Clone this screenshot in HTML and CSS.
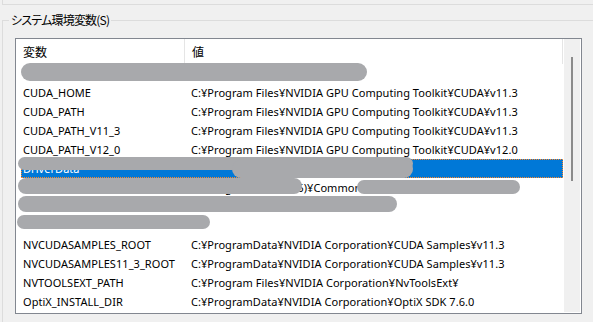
FILE: index.html
```html
<!DOCTYPE html>
<html lang="ja">
<head>
<meta charset="utf-8">
<title>システム環境変数</title>
<link rel="stylesheet" href="styles.css">
</head>
<body>
<div class="prev-group"></div>
<fieldset class="group">
  <legend class="group-title">システム環境変数(S)</legend>
  <div class="listview">
    <div class="list">
      <div class="header">
        <div class="hcell hcell-name">変数</div>
        <div class="hcell hcell-value">値</div>
      </div>
      <div class="rows">
        <div class="row"><span class="name"></span><span class="value"></span></div>
        <div class="row"><span class="name">CUDA_HOME</span><span class="value">C:¥Program Files¥NVIDIA GPU Computing Toolkit¥CUDA¥v11.3</span></div>
        <div class="row"><span class="name">CUDA_PATH</span><span class="value">C:¥Program Files¥NVIDIA GPU Computing Toolkit¥CUDA¥v11.3</span></div>
        <div class="row"><span class="name">CUDA_PATH_V11_3</span><span class="value">C:¥Program Files¥NVIDIA GPU Computing Toolkit¥CUDA¥v11.3</span></div>
        <div class="row"><span class="name">CUDA_PATH_V12_0</span><span class="value">C:¥Program Files¥NVIDIA GPU Computing Toolkit¥CUDA¥v12.0</span></div>
        <div class="row row-selected"><span class="name">DriverData</span><span class="value"></span></div>
        <div class="row"><span class="name"></span><span class="value">C:¥Program Files (x86)¥Common Files</span></div>
        <div class="row"><span class="name"></span><span class="value"></span></div>
        <div class="row"><span class="name"></span><span class="value"></span></div>
        <div class="row"><span class="name">NVCUDASAMPLES_ROOT</span><span class="value">C:¥ProgramData¥NVIDIA Corporation¥CUDA Samples¥v11.3</span></div>
        <div class="row"><span class="name">NVCUDASAMPLES11_3_ROOT</span><span class="value">C:¥ProgramData¥NVIDIA Corporation¥CUDA Samples¥v11.3</span></div>
        <div class="row"><span class="name">NVTOOLSEXT_PATH</span><span class="value">C:¥Program Files¥NVIDIA Corporation¥NvToolsExt¥</span></div>
        <div class="row"><span class="name">OptiX_INSTALL_DIR</span><span class="value">C:¥ProgramData¥NVIDIA Corporation¥OptiX SDK 7.6.0</span></div>
      </div>
    </div>
    <div class="scrollbar"><div class="thumb"></div></div>
    <div class="blot blot-1"></div>
    <div class="blot blot-2"></div>
    <div class="blot blot-3"></div>
    <div class="blot blot-4"></div>
    <div class="blot blot-5"></div>
    <div class="blot blot-6"></div>
    <div class="blot blot-7"></div>
  </div>
</fieldset>
</body>
</html>
```
FILE: styles.css
```css
html, body {
  margin: 0;
  padding: 0;
}
body {
  background: #f0f0f0;
  width: 593px;
  height: 322px;
  overflow: hidden;
  font-family: "Noto Sans", "Noto Sans CJK JP", sans-serif;
  font-size: 11px;
  letter-spacing: 0.05px;
  color: #000;
}
.prev-group {
  height: 4px;
  margin-left: 2px;
  border-left: 1px solid #dcdcdc;
  border-bottom: 1px solid #dcdcdc;
}
.group {
  margin: 7px 0 0 2px;
  padding: 0;
  width: 640px;
  height: 400px;
  box-sizing: border-box;
  border: 1px solid #dcdcdc;
  border-right: none;
}
.group-title {
  margin-left: 6px;
  padding: 0 2px;
  font-family: "Noto Sans CJK JP", sans-serif;
  font-feature-settings: "palt";
  font-size: 12px;
  letter-spacing: -0.8px;
  line-height: 16px;
  color: #000;
}
.listview {
  position: relative;
  display: flex;
  margin: 10px 0 0 12px;
  width: 567px;
  height: 276px;
  box-sizing: border-box;
  border: 1px solid #828790;
  background: #fff;
  padding: 0 1px 1px 0;
}
.list {
  width: 548px;
  flex: none;
}
.header {
  display: flex;
  height: 25px;
}
.hcell {
  box-sizing: border-box;
  border-right: 1px solid #e5e5e5;
  font-family: "Noto Sans CJK JP", sans-serif;
  font-size: 12px;
  letter-spacing: 0;
  line-height: 25px;
  height: 25px;
}
.hcell-name {
  width: 169px;
  padding-left: 7px;
}
.hcell-value {
  width: 378px;
  padding-left: 7px;
}
.rows {
  display: flex;
  flex-direction: column;
}
.row {
  display: grid;
  grid-template-columns: 163px 1fr;
  height: 19px;
  line-height: 19px;
  margin-left: 5px;
  width: 542px;
  box-sizing: border-box;
  white-space: nowrap;
  overflow: hidden;
}
.name {
  padding-left: 2px;
  overflow: hidden;
}
.value {
  padding-left: 7px;
  overflow: hidden;
}
.row-selected {
  background: #0078d7;
  color: #fff;
  border: 1px dotted #ff8728;
  line-height: 17px;
}
.row-selected .name {
  padding-left: 1px;
}
.scrollbar {
  flex: none;
  width: 16px;
  background: #f0f0f0;
}
.thumb {
  margin: 18px 0 0 7px;
  width: 2px;
  height: 124px;
  background: #8b8b8b;
}
.blot {
  position: absolute;
  background: #a8a9ac;
  border-radius: 9px;
}
.blot-1 { left: 5px;   top: 24px;  width: 346px; height: 18px; }
.blot-2 { left: 2px;   top: 118px; width: 395px; height: 13px; border-radius: 7px; }
.blot-3 { left: 216px; top: 121px; width: 181px; height: 18px; }
.blot-4 { left: 2px;   top: 139px; width: 284px; height: 16px; border-radius: 8px; }
.blot-5 { left: 341px; top: 141px; width: 163px; height: 14px; border-radius: 7px; }
.blot-6 { left: 2px;   top: 157px; width: 379px; height: 16px; border-radius: 8px; }
.blot-7 { left: 1px;   top: 176px; width: 193px; height: 14px; border-radius: 7px; }
```
